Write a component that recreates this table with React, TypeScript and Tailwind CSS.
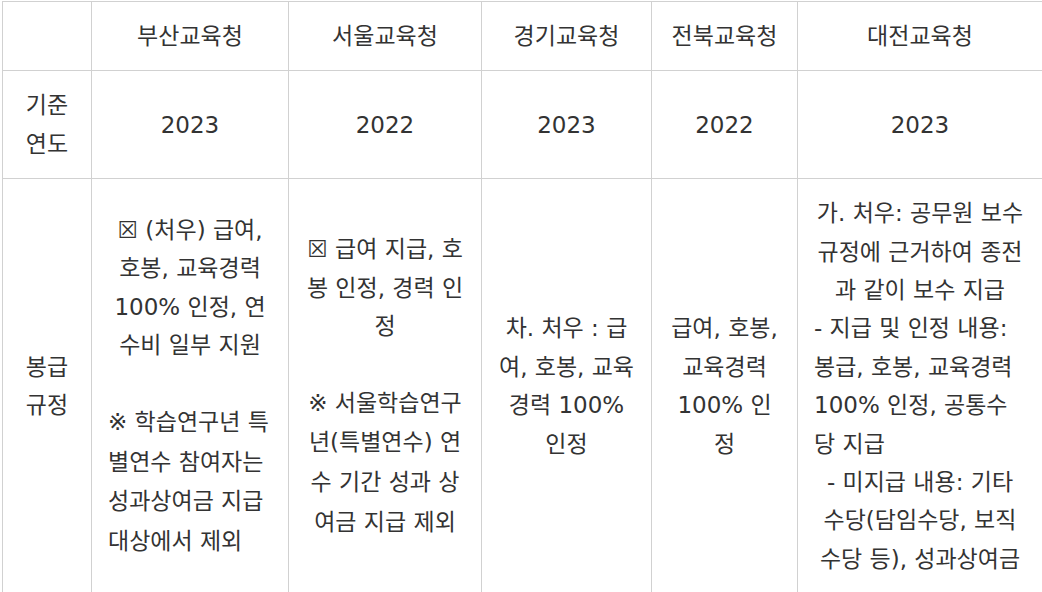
const headers = ["부산교육청", "서울교육청", "경기교육청", "전북교육청", "대전교육청"];
const years = ["2023", "2022", "2023", "2022", "2023"];

const cell = "border border-[#d1d1d1] px-4 py-[15px] text-center align-middle";

function Lines({ lines, className = "" }: { lines: string[]; className?: string }) {
  return (
    <div className={className}>
      {lines.map((line, i) => (
        <div key={i} className="whitespace-pre">
          {line}
        </div>
      ))}
    </div>
  );
}

export default function App() {
  return (
    <div
      className="h-[592px] overflow-hidden bg-white pl-[2px] pt-px text-[23px] leading-[38.4px] text-[#333333]"
      style={{ fontFamily: '"DejaVu Sans", "Noto Sans CJK KR", sans-serif' }}
    >
      <table className="w-[1040px] table-fixed border-collapse">
        <colgroup>
          <col className="w-[89px]" />
          <col className="w-[197px]" />
          <col className="w-[193px]" />
          <col className="w-[170px]" />
          <col className="w-[146px]" />
          <col className="w-[245px]" />
        </colgroup>
        <tbody>
          <tr>
            <td className={cell}></td>
            {headers.map((h) => (
              <td key={h} className={cell}>
                {h}
              </td>
            ))}
          </tr>
          <tr>
            <td className={cell}>
              <Lines lines={["기준", "연도"]} />
            </td>
            {years.map((y, i) => (
              <td key={i} className={cell}>
                {y}
              </td>
            ))}
          </tr>
          <tr>
            <td className={cell}>
              <Lines lines={["봉급", "규정"]} />
            </td>
            <td className={cell}>
              <Lines lines={["☒ (처우) 급여,", "호봉, 교육경력", "100% 인정, 연", "수비 일부 지원"]} />
              <div className="h-[38.4px]" />
              <Lines
                className="text-left leading-[39.6px]"
                lines={["※ 학습연구년 특", "별연수 참여자는", "성과상여금 지급", "대상에서 제외"]}
              />
            </td>
            <td className={cell}>
              <Lines lines={["☒ 급여 지급, 호", "봉 인정, 경력 인", "정"]} />
              <div className="h-[38.4px]" />
              <Lines
                className="leading-[39.6px]"
                lines={["※ 서울학습연구", "년(특별연수) 연", "수 기간 성과 상", "여금 지급 제외"]}
              />
            </td>
            <td className={cell}>
              <Lines lines={["차. 처우 : 급", "여, 호봉, 교육", "경력 100%", "인정"]} />
            </td>
            <td className={cell}>
              <Lines lines={["급여, 호봉,", "교육경력", "100% 인", "정"]} />
            </td>
            <td className={cell}>
              <Lines lines={["가. 처우: 공무원 보수", "규정에 근거하여 종전", "과 같이 보수 지급"]} />
              <Lines
                className="text-left"
                lines={["- 지급 및 인정 내용:", "봉급, 호봉, 교육경력", "100% 인정, 공통수", "당 지급"]}
              />
              <Lines lines={["- 미지급 내용: 기타", "수당(담임수당, 보직", "수당 등), 성과상여금"]} />
            </td>
          </tr>
        </tbody>
      </table>
    </div>
  );
}
